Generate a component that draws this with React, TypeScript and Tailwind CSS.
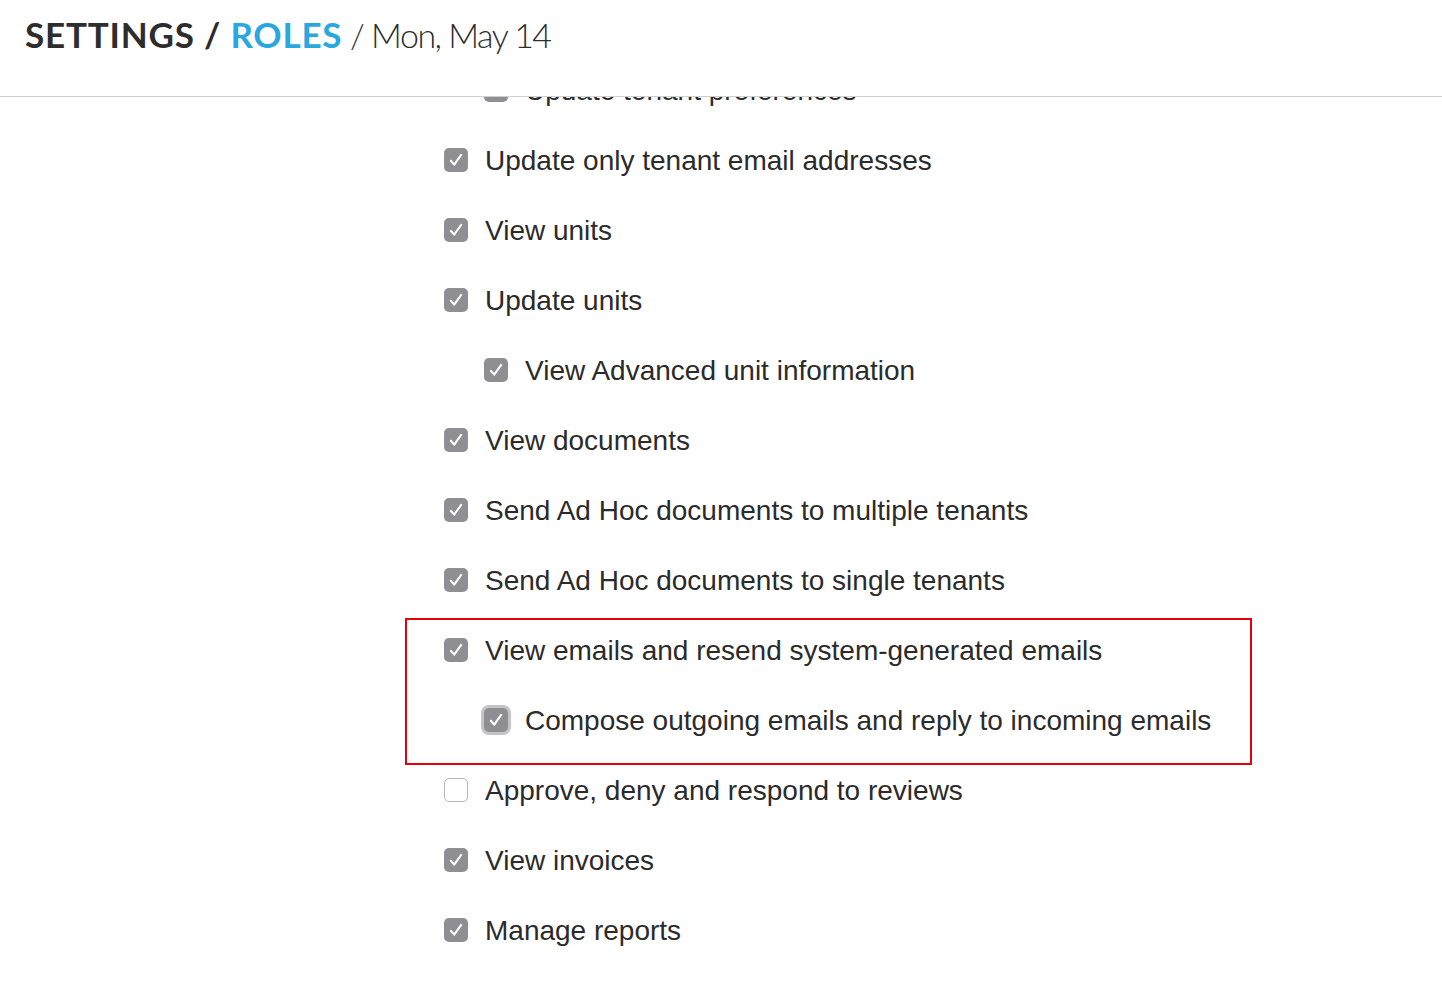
import React from 'react';

type Perm = { label: string; checked: boolean; nested?: boolean; focused?: boolean };

const perms: Perm[] = [
  { label: 'Update tenant preferences', checked: true, nested: true },
  { label: 'Update only tenant email addresses', checked: true },
  { label: 'View units', checked: true },
  { label: 'Update units', checked: true },
  { label: 'View Advanced unit information', checked: true, nested: true },
  { label: 'View documents', checked: true },
  { label: 'Send Ad Hoc documents to multiple tenants', checked: true },
  { label: 'Send Ad Hoc documents to single tenants', checked: true },
];

const emailPerms: Perm[] = [
  { label: 'View emails and resend system-generated emails', checked: true },
  { label: 'Compose outgoing emails and reply to incoming emails', checked: true, nested: true, focused: true },
];

const morePerms: Perm[] = [
  { label: 'Approve, deny and respond to reviews', checked: false },
  { label: 'View invoices', checked: true },
  { label: 'Manage reports', checked: true },
];

const Box: React.FC<{ checked: boolean; focused?: boolean }> = ({ checked, focused }) => (
  <span
    className={
      'flex h-[24px] w-[24px] shrink-0 items-center justify-center rounded-[5px] ' +
      (checked ? 'bg-[#8e8e93]' : 'border border-[#b8b8b8] bg-white') +
      (focused ? ' ring-[3px] ring-[#c4c4c8]' : '')
    }
  >
    {checked && (
      <svg width="24" height="24" viewBox="0 0 24 24" fill="none">
        <path d="M6.8 12.8 L10.2 16.6 L17.2 6.8" stroke="white" strokeWidth="2.1" strokeLinecap="round" strokeLinejoin="round" />
      </svg>
    )}
  </span>
);

const Row: React.FC<{ p: Perm }> = ({ p }) => (
  <div className={'flex h-[70px] items-center gap-[17px] ' + (p.nested ? 'pl-[40px]' : '')}>
    <Box checked={p.checked} focused={p.focused} />
    <span className="pt-[2px] text-[28px] text-[#2b2b2b]">{p.label}</span>
  </div>
);

export default function App() {
  return (
    <div className="relative h-[982px] w-[1442px] overflow-hidden bg-white" style={{ fontFamily: '"Liberation Sans", Arial, sans-serif' }}>
      <header className="absolute left-0 top-0 z-10 flex h-[97px] w-full items-start border-b border-[#cfcfcf] bg-white pl-[25px] pt-[12px]">
        <h1 className="text-[35px] leading-[44px] text-[#2d2d2d]" style={{ fontFamily: 'Lato, "Open Sans", sans-serif' }}>
          <span className="font-bold tracking-[0.8px]">SETTINGS / </span>
          <span className="font-bold tracking-[0.8px] text-[#29a8e0]">ROLES</span>
          <span className="text-[34px] font-light tracking-[-1.5px]"> / Mon, May 14</span>
        </h1>
      </header>
      <main className="pl-[444px] pt-[55px]">
        {perms.map((p) => (
          <Row key={p.label} p={p} />
        ))}
        <div className="-ml-[39px] mt-[3px] w-[847px] border-2 border-[#e3000f] pl-[37px]">
          <div className="-mt-[5px] pb-[8px]">
            {emailPerms.map((p) => (
              <Row key={p.label} p={p} />
            ))}
          </div>
        </div>
        <div className="-mt-[10px]">
          {morePerms.map((p) => (
            <Row key={p.label} p={p} />
          ))}
        </div>
      </main>
    </div>
  );
}
